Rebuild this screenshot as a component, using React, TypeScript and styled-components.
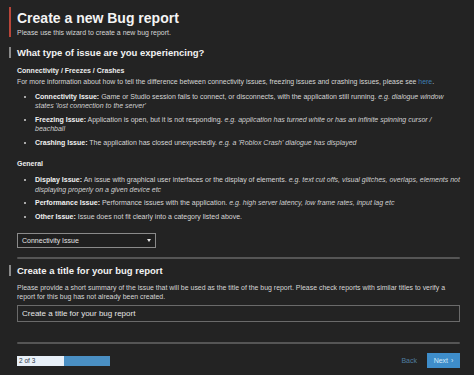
import React from 'react';
import styled, { createGlobalStyle } from 'styled-components';

const GlobalStyle = createGlobalStyle`
  html, body {
    margin: 0;
    padding: 0;
    background: #232323;
  }
  body {
    font-family: "Liberation Sans", Arial, sans-serif;
    color: #d6d6d6;
  }
`;

const Page = styled.div`
  width: 474px;
  height: 375px;
  box-sizing: border-box;
  padding: 7px 14px 0 17px;
  overflow: hidden;
`;

const BarBlock = styled.div<{ $color: string }>`
  margin-left: -8px;
  padding-left: 6px;
  border-left: 2px solid ${p => p.$color};
`;

const Header = styled(BarBlock)`
  padding-top: 3px;
`;

const Title = styled.h1`
  margin: 0;
  font-size: 14px;
  line-height: 16px;
  font-weight: 700;
  color: #f4f4f4;
`;

const Text = styled.p<{ $gap?: number }>`
  margin: ${p => p.$gap ?? 0}px 0 0;
  font-size: 6.95px;
  line-height: 9px;
  color: #d6d6d6;
`;

const SectionTitle = styled(BarBlock)<{ $gap: number }>`
  margin-top: ${p => p.$gap}px;
  font-size: 9.5px;
  line-height: 11px;
  font-weight: 700;
  color: #f2f2f2;
`;

const Group = styled.h3<{ $gap: number }>`
  margin: ${p => p.$gap}px 0 0;
  font-size: 7px;
  line-height: 9px;
  font-weight: 700;
  color: #ececec;
`;

const Link = styled.a`
  color: #3f7fb3;
  text-decoration: none;
`;

const List = styled.ul<{ $gap: number }>`
  margin: ${p => p.$gap}px 0 0;
  padding: 0 0 0 18px;
  font-size: 7px;
  line-height: 9.5px;
  li {
    margin-bottom: 4px;
  }
  li:last-child {
    margin-bottom: 0;
  }
  b {
    color: #f0f0f0;
  }
  i {
    color: #d0d0d0;
  }
`;

const Select = styled.div`
  margin-top: 12px;
  width: 139px;
  height: 15px;
  box-sizing: border-box;
  border: 1px solid #8a8a8a;
  background: #1f1f1f;
  display: flex;
  align-items: center;
  justify-content: space-between;
  padding: 0 4px 0 4px;
  font-size: 7px;
  color: #e4e4e4;
`;

const Caret = styled.span`
  width: 0;
  height: 0;
  border-left: 2.5px solid transparent;
  border-right: 2.5px solid transparent;
  border-top: 3px solid #e8e8e8;
`;

const Rule = styled.hr<{ $gap: number }>`
  margin: ${p => p.$gap}px 0 0;
  border: none;
  height: 2px;
  border-radius: 1px;
  background: #555;
`;

const TitleInput = styled.input`
  display: block;
  margin-top: 4px;
  width: 100%;
  height: 17px;
  box-sizing: border-box;
  border: 1px solid #6a6a6a;
  background: #232323;
  padding: 0 4px;
  font-family: "Liberation Sans", Arial, sans-serif;
  font-size: 8px;
  color: #e6e6e6;
  outline: none;
  &::placeholder {
    color: #e6e6e6;
  }
`;

const Footer = styled.div`
  margin-top: 9px;
  display: flex;
  align-items: center;
  justify-content: space-between;
`;

const Progress = styled.div`
  width: 93px;
  height: 10px;
  background: #4a8fc3;
  font-size: 6.5px;
  line-height: 10px;
  color: #2c3a48;
`;

const ProgressFill = styled.div`
  height: 100%;
  background: #e8f0f8;
  padding-left: 2px;
  box-sizing: border-box;
`;

const Nav = styled.div`
  display: flex;
  align-items: center;
  gap: 10px;
`;

const BackLink = styled.span`
  font-size: 7px;
  color: #4f7ea0;
`;

const NextButton = styled.button`
  width: 33px;
  height: 15px;
  border: none;
  background: #3e8dca;
  color: #d4ebfa;
  font-family: "Liberation Sans", Arial, sans-serif;
  font-size: 7px;
  padding: 0;
  display: flex;
  align-items: center;
  justify-content: center;
  gap: 3px;
`;

const App = () => {
  const step = 2;
  const total = 3;
  return (
    <Page>
      <GlobalStyle />
      <Header $color='#b9463a'>
        <Title>Create a new Bug report</Title>
        <Text $gap={2}>Please use this wizard to create a new bug report.</Text>
      </Header>

      <SectionTitle $color='#8a8a8a' $gap={10}>What type of issue are you experiencing?</SectionTitle>

      <Group $gap={8}>Connectivity / Freezes / Crashes</Group>
      <Text $gap={2}>
        For more information about how to tell the difference between connectivity issues, freezing issues and crashing
        issues, please see <Link href='#'>here</Link>.
      </Text>
      <List $gap={5.5}>
        <li>
          <b>Connectivity Issue:</b> Game or Studio session fails to connect, or disconnects, with the application still
          running. <i>e.g. dialogue window states 'lost connection to the server'</i>
        </li>
        <li>
          <b>Freezing Issue:</b> Application is open, but it is not responding.{' '}
          <i>e.g. application has turned white or has an infinite spinning cursor / beachball</i>
        </li>
        <li>
          <b>Crashing Issue:</b> The application has closed unexpectedly. <i>e.g. a 'Roblox Crash' dialogue has displayed</i>
        </li>
      </List>

      <Group $gap={12}>General</Group>
      <List $gap={7}>
        <li>
          <b>Display Issue:</b> An issue with graphical user interfaces or the display of elements.{' '}
          <i>e.g. text cut offs, visual glitches, overlaps, elements not displaying properly on a given device etc</i>
        </li>
        <li>
          <b>Performance Issue:</b> Performance issues with the application.{' '}
          <i>e.g. high server latency, low frame rates, input lag etc</i>
        </li>
        <li>
          <b>Other Issue:</b> Issue does not fit clearly into a category listed above.
        </li>
      </List>

      <Select>
        <span>Connectivity Issue</span>
        <Caret />
      </Select>

      <Rule $gap={9} />

      <SectionTitle $color='#8a8a8a' $gap={6}>Create a title for your bug report</SectionTitle>
      <Text $gap={7}>
        Please provide a short summary of the issue that will be used as the title of the bug report. Please check reports
        with similar titles to verify a report for this bug has not already been created.
      </Text>
      <TitleInput readOnly placeholder='Create a title for your bug report' />

      <Rule $gap={20} />

      <Footer>
        <Progress>
          <ProgressFill style={{ width: `${(step - 1) / (total - 1) * 100}%` }}>{step} of {total}</ProgressFill>
        </Progress>
        <Nav>
          <BackLink>Back</BackLink>
          <NextButton>
            Next <span>›</span>
          </NextButton>
        </Nav>
      </Footer>
    </Page>
  );
};

export default App;
